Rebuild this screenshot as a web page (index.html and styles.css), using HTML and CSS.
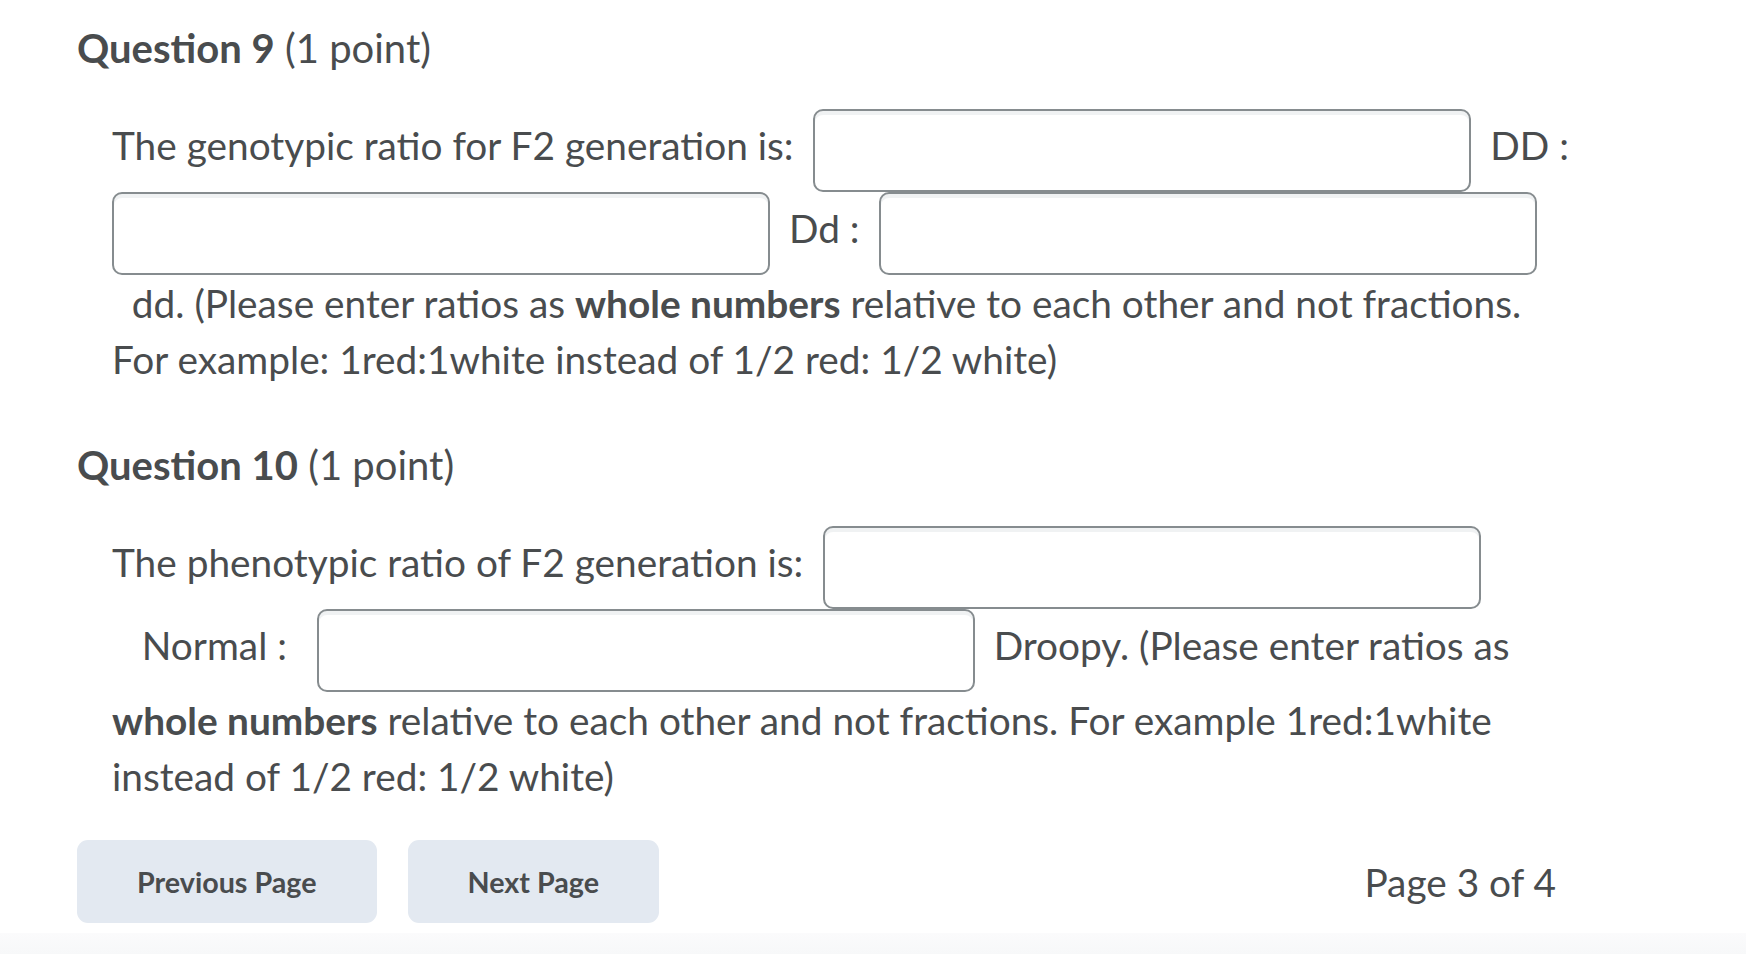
FILE: index.html
```html
<!DOCTYPE html>
<html lang="en">
<head>
<meta charset="utf-8">
<title>Quiz - Page 3 of 4</title>
<link rel="stylesheet" href="styles.css">
</head>
<body>
<main class="page">
  <section class="question q9">
    <h2 class="q-title"><strong>Question 9</strong> <span class="q-points">(1 point)</span></h2>
    <div class="q-body">The genotypic ratio for F2 generation is:&nbsp; <input class="blank" type="text" aria-label="DD"> DD : <input class="blank" type="text" aria-label="Dd"> Dd :&nbsp; <input class="blank" type="text" aria-label="dd"> &nbsp;&nbsp;dd. (Please enter ratios as <b>whole numbers</b> relative to each other and not fractions. For example: 1red:1white instead of 1/2 red: 1/2 white)</div>
  </section>
  <section class="question q10">
    <h2 class="q-title"><strong>Question 10</strong> <span class="q-points">(1 point)</span></h2>
    <div class="q-body">The phenotypic ratio of F2 generation is:&nbsp; <input class="blank" type="text" aria-label="ratio"> &nbsp;&nbsp;&nbsp;Normal :&nbsp;&nbsp;&nbsp;<input class="blank" type="text" aria-label="Normal"> Droopy. (Please enter ratios as <b>whole numbers</b> relative to each other and not fractions. For example 1red:1white instead of 1/2 red: 1/2 white)</div>
  </section>
  <nav class="pager">
    <div class="pager-buttons">
      <button class="btn" type="button">Previous Page</button>
      <button class="btn" type="button">Next Page</button>
    </div>
    <span class="page-count">Page 3 of 4</span>
  </nav>
</main>
<div class="bottom-strip"></div>
</body>
</html>
```
FILE: styles.css
```css
html, body {
  margin: 0;
  padding: 0;
  background: #ffffff;
}
body {
  font-family: Lato, "Open Sans", "Liberation Sans", sans-serif;
  color: #494c4e;
  width: 1746px;
  height: 954px;
  overflow: hidden;
  display: flex;
  flex-direction: column;
}
.page {
  padding: 24px 0 0 77px;
}
.question {
  margin: 0;
}
.q-title {
  margin: 0;
  font-size: 40px;
  line-height: 48px;
  font-weight: 400;
}
.q-title strong {
  font-weight: 700;
}
.q-body {
  margin: 37px 0 0 35px;
  width: 1466px;
  font-size: 38.8px;
  line-height: 56px;
}
.q-body b {
  font-weight: 700;
}
.q10 {
  margin-top: 54px;
}
.blank {
  box-sizing: border-box;
  width: 658px;
  height: 83px;
  margin: 0 9px 0 0;
  padding: 0 16px;
  vertical-align: middle;
  border: 2px solid #868c8f;
  border-radius: 10px;
  background: #ffffff;
  box-shadow: inset 0 4px 0 0 rgba(181, 189, 194, 0.2);
  font: inherit;
  color: inherit;
}
.pager {
  display: flex;
  align-items: center;
  justify-content: space-between;
  width: 1479px;
  margin-top: 36px;
}
.pager-buttons {
  display: flex;
  gap: 31px;
}
.btn {
  height: 83px;
  padding: 0 60px;
  border: none;
  border-radius: 11px;
  background: #e3e9f1;
  color: #494c4e;
  font-family: Lato, "Open Sans", "Liberation Sans", sans-serif;
  font-size: 28.7px;
  font-weight: 700;
}
.page-count {
  font-size: 38.8px;
  line-height: 56px;
}
.bottom-strip {
  flex: 1;
  margin-top: 10px;
  background: linear-gradient(#fbfbfc, #f7f8f9);
}
```
